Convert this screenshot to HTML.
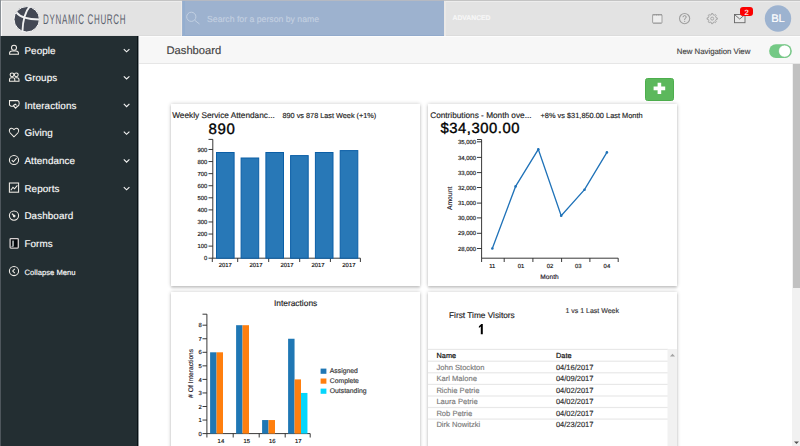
<!DOCTYPE html>
<html><head><meta charset="utf-8"><style>
*{margin:0;padding:0;box-sizing:border-box}
html,body{width:800px;height:446px;overflow:hidden;background:#fff;font-family:"Liberation Sans",sans-serif;position:relative}
.a{position:absolute}
.t{position:absolute;white-space:nowrap;line-height:1;text-rendering:geometricPrecision;-webkit-text-stroke-width:0.15px}
svg{position:absolute;overflow:visible}
.card{position:absolute;background:#fff;box-shadow:0 0 4px rgba(0,0,0,.22),0 2px 2px rgba(0,0,0,.14)}
</style></head><body>
<div class="a" style="left:0;top:0;width:800px;height:36px;background:#e3e3e3"></div>
<div class="a" style="left:0;top:0;width:800px;height:1px;background:#c4c4c4"></div>
<div class="a" style="left:0;top:1px;width:800px;height:1px;background:#ededed"></div>
<div class="a" style="left:0;top:35px;width:800px;height:1px;background:#dcdcdc"></div>
<div class="a" style="left:182px;top:1px;width:262px;height:35px;background:#9db2cf;border-bottom:1px solid #92aacb"></div>
<div class="a" style="left:444px;top:1px;width:1.5px;height:35px;background:#ebe9e7"></div>
<div class="a" style="left:181px;top:1px;width:1px;height:35px;background:#eeebe8"></div>
<div class="a" style="left:183px;top:1px;width:1.5px;height:35px;background:#94aecf"></div>
<div class="a" style="left:182px;top:0;width:262px;height:1px;background:#b5b9c2"></div>
<svg style="left:0;top:0" width="140" height="36" viewBox="0 0 140 36">
<circle cx="26.7" cy="19.3" r="12.7" fill="#434854" stroke="#f6f6f6" stroke-width="1"/>
<path d="M16.4 12.4 Q21.5 19.2 39.2 19.5" stroke="#f0f1f2" stroke-width="1.9" fill="none"/>
<path d="M29.8 6.4 Q23 14 22.4 32" stroke="#f0f1f2" stroke-width="1.9" fill="none"/>
</svg>
<div class="t" style="left:42.6px;top:12px;font-size:14px;line-height:14px;color:#5b616d;transform:scaleX(0.57);transform-origin:0 0;letter-spacing:1.2px;-webkit-text-stroke-width:0">DYNAMIC CHURCH</div>
<svg style="left:0;top:0" width="210" height="36"><circle cx="191.3" cy="16.8" r="4.6" stroke="#c2d0e2" stroke-width="1" fill="none"/><path d="M194.6 20.2 L199.5 24" stroke="#c2d0e2" stroke-width="1"/></svg>
<div class="t" style="left:207.00px;top:15.14px;font-size:8.7px;color:#c3d0e1;">Search for a person by name</div>

<div class="t" style="left:452.50px;top:15.84px;font-size:6.8px;color:#f7f7f7;font-weight:700;">ADVANCED</div>

<svg style="left:0;top:0" width="800" height="36">
<rect x="652.6" y="14.6" width="9.4" height="8.6" rx="0.8" stroke="#a2a2a2" stroke-width="1" fill="#eeeeee"/>
<path d="M652.6 14.9 H662" stroke="#8e8e8e" stroke-width="1.1" stroke-dasharray="1.2 0.5"/>
<path d="M653 23.1 H661.6" stroke="#999" stroke-width="0.8"/>
<circle cx="684.6" cy="18.6" r="5.1" stroke="#a0a0a0" stroke-width="1.1" fill="none"/>
<path d="M683 17.2 Q683 15.6 684.6 15.6 Q686.2 15.6 686.2 17.1 Q686.2 18.2 684.7 18.8 V19.9" stroke="#999" stroke-width="1" fill="none"/>
<circle cx="684.7" cy="21.3" r="0.6" fill="#999"/>
<path d="M716.11 17.76 L717.25 17.92 L717.25 19.28 L716.11 19.44 L715.56 20.77 L716.25 21.69 L715.29 22.65 L714.37 21.96 L713.04 22.51 L712.88 23.65 L711.52 23.65 L711.36 22.51 L710.03 21.96 L709.11 22.65 L708.15 21.69 L708.84 20.77 L708.29 19.44 L707.15 19.28 L707.15 17.92 L708.29 17.76 L708.84 16.43 L708.15 15.51 L709.11 14.55 L710.03 15.24 L711.36 14.69 L711.52 13.55 L712.88 13.55 L713.04 14.69 L714.37 15.24 L715.29 14.55 L716.25 15.51 L715.56 16.43 Z" stroke="#a0a0a0" stroke-width="0.95" fill="none" stroke-linejoin="round"/>
<circle cx="712.2" cy="18.6" r="1.5" stroke="#a0a0a0" stroke-width="0.9" fill="none"/>
<rect x="734.5" y="14.5" width="10.5" height="8.2" stroke="#666" stroke-width="0.9" fill="#e9e9e9"/>
<path d="M734.8 14.8 L739.7 19 L744.7 14.8" stroke="#666" stroke-width="0.9" fill="none"/>
<rect x="740" y="7" width="13" height="9" rx="3" fill="#fb0000"/>
<circle cx="778" cy="18.5" r="13.2" fill="#9db3d0"/>
</svg>
<div class="t" style="left:646.50px;width:200px;text-align:center;top:9.45px;font-size:7.5px;color:#fff;">2</div>

<div class="t" style="left:678.00px;width:200px;text-align:center;top:14.42px;font-size:11.2px;color:#fff;">BL</div>

<div class="a" style="left:0;top:36px;width:138px;height:410px;background:#232e32"></div>
<div class="a" style="left:0;top:36px;width:1px;height:410px;background:#4e565c"></div>
<div class="a" style="left:137px;top:36px;width:1px;height:410px;background:#081115"></div>
<div class="a" style="left:138px;top:36px;width:1px;height:410px;background:#8d9396"></div>
<div class="a" style="left:1px;top:1px;width:1px;height:35px;background:#fafafa"></div>
<div class="a" style="left:0;top:0;width:1px;height:36px;background:#8a9096"></div>
<div class="t" style="left:24.40px;top:46.86px;font-size:9.85px;color:#fbfbfb;letter-spacing:0.1px;">People</div>

<div class="t" style="left:24.40px;top:74.06px;font-size:9.85px;color:#fbfbfb;letter-spacing:0.1px;">Groups</div>

<div class="t" style="left:24.40px;top:101.66px;font-size:9.85px;color:#fbfbfb;letter-spacing:0.1px;">Interactions</div>

<div class="t" style="left:24.40px;top:129.36px;font-size:9.85px;color:#fbfbfb;letter-spacing:0.1px;">Giving</div>

<div class="t" style="left:24.40px;top:157.16px;font-size:9.85px;color:#fbfbfb;letter-spacing:0.1px;">Attendance</div>

<div class="t" style="left:24.40px;top:184.86px;font-size:9.85px;color:#fbfbfb;letter-spacing:0.1px;">Reports</div>

<div class="t" style="left:24.40px;top:212.46px;font-size:9.85px;color:#fbfbfb;letter-spacing:0.1px;">Dashboard</div>

<div class="t" style="left:24.40px;top:240.06px;font-size:9.85px;color:#fbfbfb;letter-spacing:0.1px;">Forms</div>

<div class="t" style="left:24.60px;top:269.42px;font-size:7.65px;color:#fbfbfb;">Collapse Menu</div>

<svg style="left:0;top:0" width="138" height="446"><g stroke="#f2eee8" stroke-width="1.05" fill="none"><path d="M123.8 49.1 L126.6 51.8 L129.4 49.1" stroke="#f4f4f4" stroke-width="1.15"/><path d="M123.8 76.3 L126.6 79.0 L129.4 76.3" stroke="#f4f4f4" stroke-width="1.15"/><path d="M123.8 103.9 L126.6 106.6 L129.4 103.9" stroke="#f4f4f4" stroke-width="1.15"/><path d="M123.8 131.6 L126.6 134.3 L129.4 131.6" stroke="#f4f4f4" stroke-width="1.15"/><path d="M123.8 159.4 L126.6 162.1 L129.4 159.4" stroke="#f4f4f4" stroke-width="1.15"/><path d="M123.8 187.1 L126.6 189.8 L129.4 187.1" stroke="#f4f4f4" stroke-width="1.15"/><circle cx="14" cy="47.8" r="2.5"/><path d="M9.6 54.3 V53 Q9.6 50.9 12 50.9 H16 Q18.4 50.9 18.4 53 V54.3 Z"/><circle cx="12" cy="74.8" r="1.9"/><circle cx="16.3" cy="74.8" r="1.9"/><path d="M9.5 81.3 V79.8 Q9.5 77.8 11.5 77.8 H13.2 Q14.8 77.8 14.8 79.8 V81.3 Z M14.3 81.3 H19 V79.8 Q19 77.8 17 77.8 H15.2"/><path d="M9.5 100.6 H17.8 Q19.2 101.2 19.2 103.6 Q19.2 105.8 17.5 106.3 L15.5 108.2 L14 106.3 H11 L9.5 105 Z"/><path d="M13 105.8 L15.3 104.2 L16.6 105.3"/><path d="M14 136.8 L10.2 133 Q8.6 131.2 9.6 129.4 Q11.5 126.9 14 129.6 Q16.5 126.9 18.4 129.4 Q19.4 131.2 17.8 133 Z"/><circle cx="14" cy="160" r="4.6"/><path d="M11.8 160.1 L13.4 161.8 L16.6 158.2"/><rect x="9.4" y="183" width="9.2" height="9.2"/><path d="M10.8 190.3 L13 187.3 L14.5 188.8 L17.4 185.3"/><circle cx="14" cy="215.6" r="4.6"/><path d="M12.1 213.6 L14.2 216.1" stroke-width="1.4"/><circle cx="14.2" cy="216.1" r="0.8" fill="#f2eee8"/><rect x="10.1" y="238.7" width="8.2" height="9.4" rx="0.8" stroke="#d6d0d0" stroke-width="1.3" fill="#05080c"/><rect x="12.3" y="240.6" width="1.5" height="5.4" fill="#c0c6c8" stroke="none"/><path d="M11.4 246.4 H13.6" stroke="#c0c6c8" stroke-width="0.9"/><circle cx="14" cy="271" r="4.6"/><path d="M14.8 268.8 L12.7 271 L14.8 273.2"/></g></svg>
<div class="a" style="left:139px;top:36px;width:661px;height:28px;background:#f7f7f7;border-top:1.5px solid #fdfdfd"></div>
<div class="a" style="left:139px;top:63px;width:661px;height:1px;background:#e6e6e6"></div>
<div class="t" style="left:166.50px;top:46.42px;font-size:11.2px;color:#444;">Dashboard</div>

<div class="t" style="left:676.80px;top:47.70px;font-size:7.8px;color:#444;">New Navigation View</div>

<svg style="left:0;top:0" width="800" height="64">
<rect x="769.1" y="44.3" width="22.7" height="13.6" rx="6.8" fill="#74c985"/>
<circle cx="784.6" cy="51.1" r="6.1" fill="#fff" stroke="#6bbf7c" stroke-width="0.7"/>
</svg>
<div class="a" style="left:792px;top:64px;width:8px;height:382px;background:#f1f1f1"></div>
<div class="a" style="left:792.8px;top:64px;width:7.2px;height:224px;background:#c1c1c1"></div>
<svg style="left:0;top:0" width="800" height="446"><path d="M794 441.5 H799 L796.5 444 Z" fill="#505050"/></svg>
<div class="a" style="left:645.3px;top:77.8px;width:29px;height:23.2px;background:#5cb85c;border:1px solid #4dae4d;border-radius:2.5px"></div>
<svg style="left:0;top:0" width="800" height="120"><path d="M659.4 82.8 V94 M653.6 88.4 H665.2" stroke="#fff" stroke-width="3.6"/></svg>
<div class="card" style="left:171px;top:104px;width:249px;height:182px"></div>
<div class="card" style="left:428px;top:104px;width:249px;height:182px"></div>
<div class="card" style="left:171px;top:292px;width:249px;height:170px"></div>
<div class="card" style="left:428px;top:292px;width:249px;height:170px"></div>
<div class="t" style="left:172.20px;top:111.82px;font-size:8.25px;color:#222;">Weekly Service Attendanc...</div>

<div class="t" style="left:282.50px;top:112.12px;font-size:7.3px;color:#222;">890 vs 878 Last Week (+1%)</div>

<div class="t" style="left:208.40px;top:122.20px;font-size:15px;color:#000;letter-spacing:0.7px;-webkit-text-stroke:0.35px #000;">890</div>

<svg style="left:0;top:0" width="800" height="446"><g stroke="#222" stroke-width="0.9" fill="none"><path d="M208.5 139.4 H212.8 V258.2 H360.4 V262"/><path d="M208.5 258.20 H212.8"/><path d="M208.5 246.12 H212.8"/><path d="M208.5 234.04 H212.8"/><path d="M208.5 221.96 H212.8"/><path d="M208.5 209.88 H212.8"/><path d="M208.5 197.80 H212.8"/><path d="M208.5 185.72 H212.8"/><path d="M208.5 173.64 H212.8"/><path d="M208.5 161.56 H212.8"/><path d="M208.5 149.48 H212.8"/><path d="M212.3 258.2 V262"/><path d="M237.7 258.2 V262"/><path d="M268.7 258.2 V262"/><path d="M299.7 258.2 V262"/><path d="M330.4 258.2 V262"/></g><g fill="#2878b7" stroke="#0a5ea6" stroke-width="1"><rect x="216.5" y="152.5" width="17.6" height="105.7"/><rect x="241.1" y="158.0" width="17.6" height="100.2"/><rect x="265.9" y="152.5" width="17.6" height="105.7"/><rect x="290.6" y="155.6" width="17.6" height="102.6"/><rect x="315.4" y="152.5" width="17.6" height="105.7"/><rect x="340.2" y="150.6" width="17.6" height="107.6"/></g></svg>
<div class="t" style="right:592.70px;top:257.31px;font-size:5.9px;color:#111;">0</div>

<div class="t" style="right:592.70px;top:245.23px;font-size:5.9px;color:#111;">100</div>

<div class="t" style="right:592.70px;top:233.15px;font-size:5.9px;color:#111;">200</div>

<div class="t" style="right:592.70px;top:221.07px;font-size:5.9px;color:#111;">300</div>

<div class="t" style="right:592.70px;top:208.99px;font-size:5.9px;color:#111;">400</div>

<div class="t" style="right:592.70px;top:196.91px;font-size:5.9px;color:#111;">500</div>

<div class="t" style="right:592.70px;top:184.83px;font-size:5.9px;color:#111;">600</div>

<div class="t" style="right:592.70px;top:172.75px;font-size:5.9px;color:#111;">700</div>

<div class="t" style="right:592.70px;top:160.67px;font-size:5.9px;color:#111;">800</div>

<div class="t" style="right:592.70px;top:148.59px;font-size:5.9px;color:#111;">900</div>

<div class="t" style="left:125.30px;width:200px;text-align:center;top:264.11px;font-size:5.9px;color:#111;">2017</div>

<div class="t" style="left:156.00px;width:200px;text-align:center;top:264.11px;font-size:5.9px;color:#111;">2017</div>

<div class="t" style="left:187.00px;width:200px;text-align:center;top:264.11px;font-size:5.9px;color:#111;">2017</div>

<div class="t" style="left:218.00px;width:200px;text-align:center;top:264.11px;font-size:5.9px;color:#111;">2017</div>

<div class="t" style="left:248.90px;width:200px;text-align:center;top:264.11px;font-size:5.9px;color:#111;">2017</div>

<div class="t" style="left:430.20px;top:111.82px;font-size:8.25px;color:#222;">Contributions - Month ove...</div>

<div class="t" style="left:540.50px;top:112.04px;font-size:7.4px;color:#222;">+8% vs $31,850.00 Last Month</div>

<div class="t" style="left:440.40px;top:122.17px;font-size:14.8px;color:#000;letter-spacing:0.55px;-webkit-text-stroke:0.35px #000;">$34,300.00</div>

<svg style="left:0;top:0" width="800" height="446"><g stroke="#222" stroke-width="0.9" fill="none"><path d="M477 139.5 H481.6 V258.2 H618.2 V262 M481.6 258.2 V262"/><path d="M477 141.8 H481.6"/><path d="M477 157.4 H481.6"/><path d="M477 172.6 H481.6"/><path d="M477 187.5 H481.6"/><path d="M477 203.1 H481.6"/><path d="M477 217.9 H481.6"/><path d="M477 233.3 H481.6"/><path d="M477 248.5 H481.6"/><path d="M504.2 258.2 V262"/><path d="M532.9 258.2 V262"/><path d="M561.6 258.2 V262"/><path d="M589.9 258.2 V262"/></g><polyline fill="none" stroke="#1f72b8" stroke-width="1.3" points="492.3,248.5 515.6,186.4 538.3,149.3 561.2,215.8 584.5,189.7 606.9,152.4"/><circle cx="492.3" cy="248.5" r="1.3" fill="#1f72b8"/><circle cx="515.6" cy="186.4" r="1.3" fill="#1f72b8"/><circle cx="538.3" cy="149.3" r="1.3" fill="#1f72b8"/><circle cx="561.2" cy="215.8" r="1.3" fill="#1f72b8"/><circle cx="584.5" cy="189.7" r="1.3" fill="#1f72b8"/><circle cx="606.9" cy="152.4" r="1.3" fill="#1f72b8"/></svg>
<div class="t" style="right:324.00px;top:140.91px;font-size:5.9px;color:#111;">35,000</div>

<div class="t" style="right:324.00px;top:156.51px;font-size:5.9px;color:#111;">34,000</div>

<div class="t" style="right:324.00px;top:171.71px;font-size:5.9px;color:#111;">33,000</div>

<div class="t" style="right:324.00px;top:186.61px;font-size:5.9px;color:#111;">32,000</div>

<div class="t" style="right:324.00px;top:202.21px;font-size:5.9px;color:#111;">31,000</div>

<div class="t" style="right:324.00px;top:217.01px;font-size:5.9px;color:#111;">30,000</div>

<div class="t" style="right:324.00px;top:232.41px;font-size:5.9px;color:#111;">29,000</div>

<div class="t" style="right:324.00px;top:247.61px;font-size:5.9px;color:#111;">28,000</div>

<div class="t" style="left:392.30px;width:200px;text-align:center;top:265.31px;font-size:5.9px;color:#111;">11</div>

<div class="t" style="left:421.00px;width:200px;text-align:center;top:265.31px;font-size:5.9px;color:#111;">01</div>

<div class="t" style="left:450.10px;width:200px;text-align:center;top:265.31px;font-size:5.9px;color:#111;">02</div>

<div class="t" style="left:478.20px;width:200px;text-align:center;top:265.31px;font-size:5.9px;color:#111;">03</div>

<div class="t" style="left:506.90px;width:200px;text-align:center;top:265.31px;font-size:5.9px;color:#111;">04</div>

<div class="t" style="left:449.50px;width:200px;text-align:center;top:275.11px;font-size:6.6px;color:#24182a;">Month</div>

<div class="t" style="left:401.4px;width:100px;text-align:center;top:195.29999999999998px;font-size:6.8px;color:#24182a;transform:rotate(-90deg);transform-origin:50% 50%">Amount</div>
<div class="t" style="left:195.60px;width:200px;text-align:center;top:298.69px;font-size:8.4px;color:#222;">Interactions</div>

<svg style="left:0;top:0" width="800" height="446"><g stroke="#222" stroke-width="0.9" fill="none"><path d="M202.5 314.2 H206.9 V433.6 H310.2 V437.5 M206.9 433.6 V437.5"/><path d="M202.5 433.60 H206.9"/><path d="M202.5 420.05 H206.9"/><path d="M202.5 406.50 H206.9"/><path d="M202.5 392.95 H206.9"/><path d="M202.5 379.40 H206.9"/><path d="M202.5 365.85 H206.9"/><path d="M202.5 352.30 H206.9"/><path d="M202.5 338.75 H206.9"/><path d="M202.5 325.20 H206.9"/><path d="M233.2 433.6 V437.5"/><path d="M259.2 433.6 V437.5"/><path d="M285.2 433.6 V437.5"/></g><rect x="210.10" y="352.30" width="6.45" height="81.30" fill="#1f77b4"/><rect x="216.55" y="352.30" width="6.45" height="81.30" fill="#ff7f0e"/><rect x="236.10" y="325.20" width="6.45" height="108.40" fill="#1f77b4"/><rect x="242.55" y="325.20" width="6.45" height="108.40" fill="#ff7f0e"/><rect x="262.10" y="420.05" width="6.45" height="13.55" fill="#1f77b4"/><rect x="268.55" y="420.05" width="6.45" height="13.55" fill="#ff7f0e"/><rect x="288.10" y="338.75" width="6.45" height="94.85" fill="#1f77b4"/><rect x="294.55" y="379.40" width="6.45" height="54.20" fill="#ff7f0e"/><rect x="301.00" y="392.95" width="6.45" height="40.65" fill="#06d6fc"/><rect x="320.6" y="368.6" width="5.8" height="5.2" fill="#1f77b4"/><rect x="320.6" y="378.5" width="5.8" height="5.2" fill="#ff7f0e"/><rect x="320.6" y="388.6" width="5.8" height="5.2" fill="#06d6fc"/></svg>
<div class="t" style="right:598.20px;top:432.71px;font-size:5.9px;color:#111;">0</div>

<div class="t" style="right:598.20px;top:419.16px;font-size:5.9px;color:#111;">1</div>

<div class="t" style="right:598.20px;top:405.61px;font-size:5.9px;color:#111;">2</div>

<div class="t" style="right:598.20px;top:392.06px;font-size:5.9px;color:#111;">3</div>

<div class="t" style="right:598.20px;top:378.51px;font-size:5.9px;color:#111;">4</div>

<div class="t" style="right:598.20px;top:364.96px;font-size:5.9px;color:#111;">5</div>

<div class="t" style="right:598.20px;top:351.41px;font-size:5.9px;color:#111;">6</div>

<div class="t" style="right:598.20px;top:337.86px;font-size:5.9px;color:#111;">7</div>

<div class="t" style="right:598.20px;top:324.31px;font-size:5.9px;color:#111;">8</div>

<div class="t" style="left:120.90px;width:200px;text-align:center;top:439.81px;font-size:5.9px;color:#111;">14</div>

<div class="t" style="left:146.70px;width:200px;text-align:center;top:439.81px;font-size:5.9px;color:#111;">15</div>

<div class="t" style="left:172.30px;width:200px;text-align:center;top:439.81px;font-size:5.9px;color:#111;">16</div>

<div class="t" style="left:198.30px;width:200px;text-align:center;top:439.81px;font-size:5.9px;color:#111;">17</div>

<div class="t" style="left:329.80px;top:369.34px;font-size:6.8px;color:#333;">Assigned</div>

<div class="t" style="left:329.80px;top:379.24px;font-size:6.8px;color:#333;">Complete</div>

<div class="t" style="left:329.80px;top:389.34px;font-size:6.8px;color:#333;">Outstanding</div>

<div class="t" style="left:142.2px;width:100px;text-align:center;top:370.20000000000005px;font-size:6.7px;color:#24182a;transform:rotate(-90deg);transform-origin:50% 50%"># Of Interactions</div>
<div class="t" style="left:449.00px;top:311.27px;font-size:8.3px;color:#222;">First Time Visitors</div>

<svg style="left:0;top:0" width="800" height="446"><path d="M482.8 334.3 V324.1 H481.3 L478.9 326.2 V328 L480.8 326.5 V334.3 Z" fill="#000"/></svg>
<div class="t" style="left:565.40px;top:307.87px;font-size:7.0px;color:#333;">1 vs 1 Last Week</div>

<svg style="left:0;top:0" width="800" height="446"><rect x="428" y="348.79999999999995" width="240" height="1.2" fill="#e8e8e8"/><rect x="428" y="360.59999999999997" width="240" height="1.2" fill="#e8e8e8"/><rect x="428" y="372.2" width="240" height="1.2" fill="#e8e8e8"/><rect x="428" y="383.79999999999995" width="240" height="1.2" fill="#e8e8e8"/><rect x="428" y="395.4" width="240" height="1.2" fill="#e8e8e8"/><rect x="428" y="406.9" width="240" height="1.2" fill="#e8e8e8"/><rect x="428" y="418.5" width="240" height="1.2" fill="#e8e8e8"/><rect x="667.5" y="349" width="9.5" height="97" fill="#f1f1f1"/><path d="M670 356.5 H675 L672.5 353.8 Z" fill="#a3a3a3"/></svg>
<div class="t" style="left:436.40px;top:352.42px;font-size:7.3px;color:#111;letter-spacing:0.1px;-webkit-text-stroke:0.22px #111;">Name</div>

<div class="t" style="left:555.90px;top:352.42px;font-size:7.3px;color:#111;letter-spacing:0.1px;-webkit-text-stroke:0.22px #111;">Date</div>

<div class="t" style="left:436.40px;top:363.57px;font-size:7.6px;color:#7a7a7a;">John Stockton</div>

<div class="t" style="left:555.90px;top:363.65px;font-size:7.5px;color:#2a2a2a;">04/16/2017</div>

<div class="t" style="left:436.40px;top:375.13px;font-size:7.6px;color:#7a7a7a;">Karl Malone</div>

<div class="t" style="left:555.90px;top:375.21px;font-size:7.5px;color:#2a2a2a;">04/09/2017</div>

<div class="t" style="left:436.40px;top:386.69px;font-size:7.6px;color:#7a7a7a;">Richie Petrie</div>

<div class="t" style="left:555.90px;top:386.77px;font-size:7.5px;color:#2a2a2a;">04/02/2017</div>

<div class="t" style="left:436.40px;top:398.25px;font-size:7.6px;color:#7a7a7a;">Laura Petrie</div>

<div class="t" style="left:555.90px;top:398.33px;font-size:7.5px;color:#2a2a2a;">04/02/2017</div>

<div class="t" style="left:436.40px;top:409.81px;font-size:7.6px;color:#7a7a7a;">Rob Petrie</div>

<div class="t" style="left:555.90px;top:409.89px;font-size:7.5px;color:#2a2a2a;">04/02/2017</div>

<div class="t" style="left:436.40px;top:421.37px;font-size:7.6px;color:#7a7a7a;">Dirk Nowitzki</div>

<div class="t" style="left:555.90px;top:421.45px;font-size:7.5px;color:#2a2a2a;">04/23/2017</div>

</body></html>
